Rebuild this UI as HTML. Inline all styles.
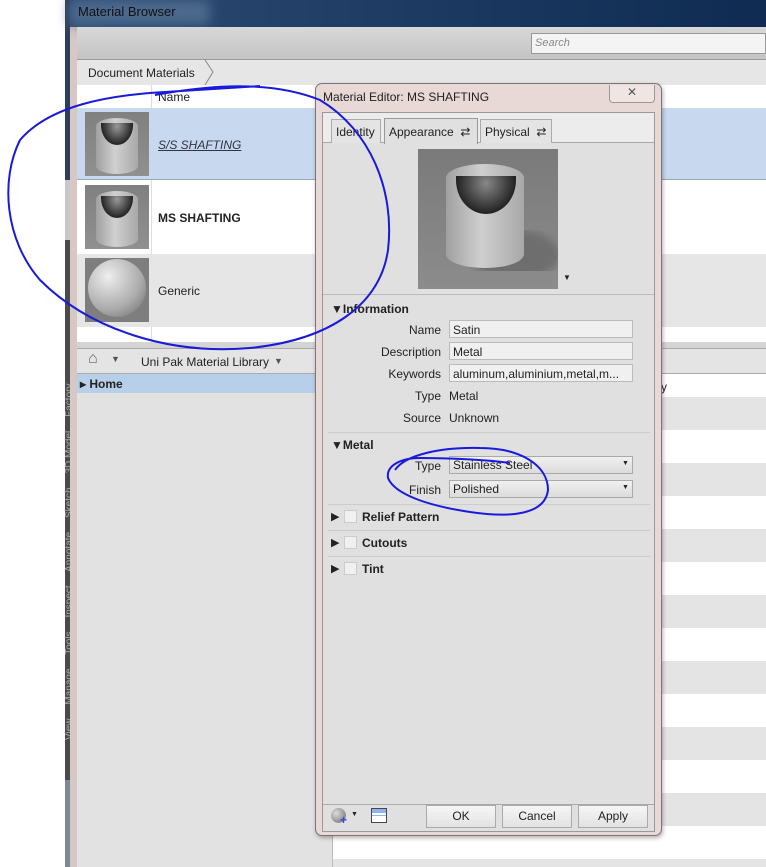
<!DOCTYPE html>
<html><head><meta charset="utf-8"><style>
*{margin:0;padding:0;box-sizing:border-box}
body{width:766px;height:867px;overflow:hidden;background:#fff;font-family:"Liberation Sans",sans-serif;font-size:12px;color:#222;position:relative}
.a{position:absolute}
.t{position:absolute;white-space:nowrap}
.th{position:absolute;width:64px;height:64px;background:linear-gradient(#808080,#909090);overflow:hidden}
.th .c{position:absolute;left:11px;top:6px;width:42px;height:56px;border-radius:21px/8px;background:linear-gradient(90deg,#a0a0a0,#d0d0d0 45%,#a8a8a8)}
.th .d{position:absolute;left:16px;top:11px;width:32px;height:22px;border-radius:0 0 16px 16px/0 0 20px 20px;background:radial-gradient(ellipse at 50% 15%,#999,#222 70%)}
</style></head><body>
<!-- left dark toolbar -->
<div class="a" style="left:65px;top:0;width:12px;height:867px;background:#4a4a4a"></div>
<div class="a" style="left:65px;top:0;width:12px;height:180px;background:#2c3e5a"></div>
<div class="a" style="left:65px;top:180px;width:5px;height:60px;background:#c8c8c8"></div>
<div class="a" style="left:65px;top:780px;width:12px;height:87px;background:#7c8a98"></div>
<div class="t" style="transform:rotate(-90deg);transform-origin:left top;color:#aaa;font-size:10px;top:740px;left:64px">View &nbsp;&nbsp;&nbsp; Manage &nbsp;&nbsp;&nbsp; Tools &nbsp;&nbsp;&nbsp; Inspect &nbsp;&nbsp;&nbsp; Annotate &nbsp;&nbsp;&nbsp; Sketch &nbsp;&nbsp;&nbsp; 3D Model &nbsp;&nbsp;&nbsp; Factory</div>
<div class="a" style="left:70px;top:0;width:7px;height:867px;background:#d8c8c4"></div>
<!-- title bar -->
<div class="a" style="left:70px;top:0;width:696px;height:27px;background:linear-gradient(90deg,#2d4b73,#1c3a62 50%,#0f2b52)"></div>
<div class="a" style="left:70px;top:0;width:140px;height:25px;background:#4d6a8e;filter:blur(6px)"></div>
<div class="t" style="left:78px;top:4px;font-size:13px;color:#111">Material Browser</div>
<!-- browser body -->
<div class="a" style="left:77px;top:27px;width:689px;height:840px;background:#e2e2e2"></div>
<div class="a" style="left:77px;top:27px;width:689px;height:33px;background:linear-gradient(#d8d8d8,#c4c4c4);border-bottom:1px solid #999"></div>
<div class="a" style="left:531px;top:33px;width:235px;height:21px;background:#f4f4f4;border:1px solid #999"></div>
<div class="t" style="left:535px;top:37px;font-style:italic;color:#888;font-size:11px">Search</div>
<div class="a" style="left:77px;top:60px;width:689px;height:25px;background:#e6e6e6"></div>
<div class="t" style="left:88px;top:66px">Document Materials</div>
<svg class="a" style="left:203px;top:60px" width="12" height="25"><path d="M2 0 L10 12 L2 25" fill="none" stroke="#888"/></svg>
<div class="a" style="left:77px;top:85px;width:689px;height:257px;background:#fff"></div>
<div class="a" style="left:151px;top:85px;width:1px;height:257px;background:#ddd"></div>
<div class="t" style="left:158px;top:90px">Name</div>
<div class="a" style="left:77px;top:108px;width:689px;height:72px;background:#c8d8ee;border-bottom:1px solid #9ab"></div>
<div class="a" style="left:77px;top:254px;width:689px;height:73px;background:#e6e6e6"></div>
<div class="a" style="left:77px;top:342px;width:689px;height:6px;background:#d4d4d4"></div>
<!-- thumbnails -->
<div class="th" style="left:85px;top:112px"><div class="c"></div><div class="d"></div></div>
<div class="th" style="left:85px;top:185px"><div class="c"></div><div class="d"></div></div>
<div class="a" style="left:85px;top:258px;width:64px;height:64px;background:#7e7e7e"></div>
<div class="a" style="left:88px;top:259px;width:58px;height:58px;border-radius:50%;background:radial-gradient(circle at 35% 30%,#eee,#aaa 60%,#666)"></div>
<div class="t" style="left:158px;top:138px;font-style:italic;text-decoration:underline;color:#334">S/S SHAFTING</div>
<div class="t" style="left:158px;top:211px;font-weight:bold">MS SHAFTING</div>
<div class="t" style="left:158px;top:284px">Generic</div>
<!-- lower breadcrumb -->
<div class="a" style="left:77px;top:348px;width:689px;height:26px;background:#e4e4e4;border-top:1px solid #aaa;border-bottom:1px solid #aaa"></div>
<div class="t" style="left:88px;top:350px;font-size:16px;color:#666">⌂</div>
<div class="t" style="left:111px;top:354px;font-size:9px;color:#555">▼</div>
<div class="t" style="left:141px;top:355px">Uni Pak Material Library</div>
<div class="t" style="left:274px;top:356px;font-size:9px;color:#555">▼</div>
<div class="a" style="left:77px;top:374px;width:255px;height:19px;background:#b8cfe9"></div>
<div class="t" style="left:80px;top:377px;font-weight:bold;font-size:12px">▸ Home</div>
<div class="a" style="left:332px;top:374px;width:1px;height:493px;background:#bbb"></div>
<div class="a" style="left:333px;top:374px;width:433px;height:493px;background:#fff"></div>
<div class="a" style="left:333px;top:397px;width:433px;height:470px;background:repeating-linear-gradient(#e4e4e4 0 33px,#fff 33px 66px)"></div>
<div class="t" style="left:657px;top:380px">ry</div>
<!-- dialog -->
<div class="a" style="left:315px;top:83px;width:347px;height:753px;background:#e8d8d6;border:1px solid #777;border-radius:7px;box-shadow:1px 2px 4px rgba(0,0,0,.3)"></div>
<div class="t" style="left:323px;top:90px">Material Editor: MS SHAFTING</div>
<div class="a" style="left:609px;top:85px;width:46px;height:18px;border:1px solid #999;border-top:none;border-radius:0 0 4px 4px;background:#efe6e4;text-align:center;color:#555;font-size:12px">✕</div>
<div class="a" style="left:322px;top:112px;width:333px;height:720px;background:#e0e0e0;border:1px solid #999"></div>
<div class="a" style="left:323px;top:113px;width:331px;height:30px;background:#ececec;border-bottom:1px solid #aaa"></div>
<div class="a" style="left:331px;top:119px;width:50px;height:24px;background:#e4e4e4;border:1px solid #aaa;border-bottom:none"></div>
<div class="t" style="left:336px;top:125px">Identity</div>
<div class="a" style="left:384px;top:118px;width:94px;height:26px;background:#e0e0e0;border:1px solid #999;border-bottom:none"></div>
<div class="t" style="left:389px;top:125px">Appearance &nbsp;⇄</div>
<div class="a" style="left:480px;top:119px;width:72px;height:24px;background:#e4e4e4;border:1px solid #aaa;border-bottom:none"></div>
<div class="t" style="left:485px;top:125px">Physical &nbsp;⇄</div>
<!-- preview -->
<div class="a" style="left:418px;top:149px;width:140px;height:140px;background:linear-gradient(#7a7a7a,#8c8c8c)"></div>
<div class="a" style="left:470px;top:230px;width:90px;height:50px;background:#6e6e6e;border-radius:50%;filter:blur(4px);clip-path:inset(0 2px 9px 0)"></div>
<div class="a" style="left:446px;top:164px;width:78px;height:104px;border-radius:38px/14px;background:linear-gradient(90deg,#a0a0a0,#cfcfcf 45%,#a8a8a8)"></div>
<div class="a" style="left:456px;top:176px;width:60px;height:38px;border-radius:0 0 30px 30px/0 0 34px 34px;background:radial-gradient(ellipse at 50% 20%,#888,#222 70%)"></div>
<div class="t" style="left:563px;top:273px;font-size:8px">▼</div>
<div class="a" style="left:323px;top:294px;width:331px;height:1px;background:#bbb"></div>
<div class="t" style="left:331px;top:302px;font-weight:bold">▼Information</div>
<div class="t" style="left:343px;top:323px;width:98px;text-align:right">Name</div>
<div class="t" style="left:343px;top:345px;width:98px;text-align:right">Description</div>
<div class="t" style="left:343px;top:367px;width:98px;text-align:right">Keywords</div>
<div class="t" style="left:343px;top:389px;width:98px;text-align:right">Type</div>
<div class="t" style="left:343px;top:411px;width:98px;text-align:right">Source</div>
<div class="a" style="left:449px;top:320px;width:184px;height:18px;background:#f0f0f0;border:1px solid #bbb"></div>
<div class="a" style="left:449px;top:342px;width:184px;height:18px;background:#f0f0f0;border:1px solid #bbb"></div>
<div class="a" style="left:449px;top:364px;width:184px;height:18px;background:#f0f0f0;border:1px solid #bbb"></div>
<div class="t" style="left:453px;top:323px">Satin</div>
<div class="t" style="left:453px;top:345px">Metal</div>
<div class="t" style="left:453px;top:367px">aluminum,aluminium,metal,m...</div>
<div class="t" style="left:449px;top:389px">Metal</div>
<div class="t" style="left:449px;top:411px">Unknown</div>
<div class="a" style="left:328px;top:432px;width:322px;height:1px;background:#ccc"></div>
<div class="t" style="left:331px;top:438px;font-weight:bold">▼Metal</div>
<div class="t" style="left:343px;top:459px;width:98px;text-align:right">Type</div>
<div class="t" style="left:343px;top:483px;width:98px;text-align:right">Finish</div>
<div class="a" style="left:449px;top:456px;width:184px;height:18px;background:linear-gradient(#f0f0f0,#dcdcdc);border:1px solid #aaa"></div>
<div class="a" style="left:449px;top:480px;width:184px;height:18px;background:linear-gradient(#f0f0f0,#dcdcdc);border:1px solid #aaa"></div>
<div class="t" style="left:453px;top:458px">Stainless Steel</div>
<div class="t" style="left:453px;top:482px">Polished</div>
<div class="t" style="left:622px;top:460px;font-size:7px">▼</div>
<div class="t" style="left:622px;top:484px;font-size:7px">▼</div>
<div class="a" style="left:328px;top:504px;width:322px;height:1px;background:#ccc"></div>
<div class="a" style="left:328px;top:530px;width:322px;height:1px;background:#ccc"></div>
<div class="a" style="left:328px;top:556px;width:322px;height:1px;background:#ccc"></div>
<div class="t" style="left:331px;top:510px;font-size:11px">▶</div>
<div class="t" style="left:331px;top:536px;font-size:11px">▶</div>
<div class="t" style="left:331px;top:562px;font-size:11px">▶</div>
<div class="a" style="left:344px;top:510px;width:13px;height:13px;background:#f0f0f0;border:1px solid #ccc"></div>
<div class="a" style="left:344px;top:536px;width:13px;height:13px;background:#f0f0f0;border:1px solid #ccc"></div>
<div class="a" style="left:344px;top:562px;width:13px;height:13px;background:#f0f0f0;border:1px solid #ccc"></div>
<div class="t" style="left:362px;top:510px;font-weight:bold">Relief Pattern</div>
<div class="t" style="left:362px;top:536px;font-weight:bold">Cutouts</div>
<div class="t" style="left:362px;top:562px;font-weight:bold">Tint</div>
<!-- footer -->
<div class="a" style="left:323px;top:804px;width:331px;height:1px;background:#aaa"></div>
<div class="a" style="left:331px;top:808px;width:15px;height:15px;border-radius:50%;background:radial-gradient(circle at 35% 35%,#ddd,#666)"></div>
<div class="t" style="left:340px;top:813px;color:#2a4ed8;font-weight:bold;font-size:12px">+</div>
<div class="t" style="left:351px;top:811px;font-size:7px">▼</div>
<div class="a" style="left:371px;top:808px;width:16px;height:15px;border:1px solid #445;background:linear-gradient(#8fb4e8 0 4px,#fff 4px 6px,#8fb4e8 6px 7px,#fff 7px)"></div>
<div class="a" style="left:426px;top:805px;width:70px;height:23px;background:linear-gradient(#f6f6f6,#e2e2e2);border:1px solid #aaa;text-align:center;line-height:21px">OK</div>
<div class="a" style="left:502px;top:805px;width:70px;height:23px;background:linear-gradient(#f6f6f6,#e2e2e2);border:1px solid #aaa;text-align:center;line-height:21px">Cancel</div>
<div class="a" style="left:578px;top:805px;width:70px;height:23px;background:linear-gradient(#f6f6f6,#e2e2e2);border:1px solid #aaa;text-align:center;line-height:21px">Apply</div>
<!-- annotations -->
<svg class="a" style="left:0;top:0" width="766" height="867">
<path d="M155 95 C210 85 270 80 320 100 C370 130 395 190 388 250 C380 305 330 340 250 348 C170 355 90 330 40 280 C5 240 0 180 20 140 C50 105 110 95 165 92 C200 90 230 88 260 86" fill="none" stroke="#1a1adb" stroke-width="2"/>
<path d="M395 470 C405 455 440 447 480 448 C520 448 548 465 548 490 C545 515 510 518 470 512 C430 506 395 495 388 478 C386 466 400 458 420 458 C450 458 490 460 510 463" fill="none" stroke="#1a1adb" stroke-width="2"/>
</svg>
</body></html>
